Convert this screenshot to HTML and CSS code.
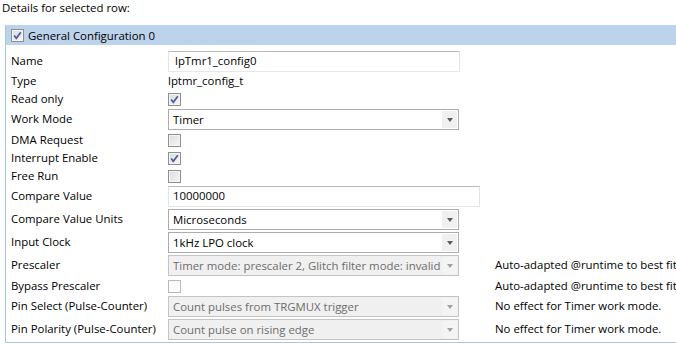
FILE: index.html
```html
<!DOCTYPE html>
<html lang="en">
<head>
  <meta charset="UTF-8">
  <meta name="viewport" content="width=device-width, initial-scale=1.0">
  <title>Details for selected row</title>
  <link rel="stylesheet" href="styles.css">
</head>
<body>
  <p class="caption">Details for selected row:</p>

  <div class="group">
    <div class="group-head">
      <span class="cb checked"><svg viewBox="0 0 11 11"><path d="M2.2 5.6 L4.3 8.3 L8.8 2.2"/></svg></span>
      <span>General Configuration 0</span>
    </div>

    <div class="props">
      <div class="row field">
        <span class="label">Name</span>
        <div class="textbox">lpTmr1_config0</div>
      </div>

      <div class="row plain">
        <span class="label">Type</span>
        <span class="value">lptmr_config_t</span>
      </div>

      <div class="row check">
        <span class="label">Read only</span>
        <span class="cb checked"><svg viewBox="0 0 11 11"><path d="M2.2 5.6 L4.3 8.3 L8.8 2.2"/></svg></span>
      </div>

      <div class="row field">
        <span class="label">Work Mode</span>
        <div class="combo"><span class="combo-text">Timer</span><span class="combo-btn"><i class="arrow"></i></span></div>
      </div>

      <div class="row check">
        <span class="label">DMA Request</span>
        <span class="cb"></span>
      </div>

      <div class="row check">
        <span class="label">Interrupt Enable</span>
        <span class="cb checked"><svg viewBox="0 0 11 11"><path d="M2.2 5.6 L4.3 8.3 L8.8 2.2"/></svg></span>
      </div>

      <div class="row check">
        <span class="label">Free Run</span>
        <span class="cb"></span>
      </div>

      <div class="row field">
        <span class="label">Compare Value</span>
        <div class="textbox wide">10000000</div>
      </div>

      <div class="row field">
        <span class="label">Compare Value Units</span>
        <div class="combo"><span class="combo-text">Microseconds</span><span class="combo-btn"><i class="arrow"></i></span></div>
      </div>

      <div class="row field">
        <span class="label">Input Clock</span>
        <div class="combo"><span class="combo-text">1kHz LPO clock</span><span class="combo-btn"><i class="arrow"></i></span></div>
      </div>

      <div class="row field">
        <span class="label">Prescaler</span>
        <div class="combo disabled"><span class="combo-text">Timer mode: prescaler 2, Glitch filter mode: invalid</span><span class="combo-btn"><i class="arrow"></i></span></div>
        <span class="note">Auto-adapted @runtime to best fit</span>
      </div>

      <div class="row check">
        <span class="label">Bypass Prescaler</span>
        <span class="cb disabled"></span>
        <span class="note after-cb">Auto-adapted @runtime to best fit</span>
      </div>

      <div class="row field">
        <span class="label">Pin Select (Pulse-Counter)</span>
        <div class="combo disabled"><span class="combo-text">Count pulses from TRGMUX trigger</span><span class="combo-btn"><i class="arrow"></i></span></div>
        <span class="note">No effect for Timer work mode.</span>
      </div>

      <div class="row field">
        <span class="label">Pin Polarity (Pulse-Counter)</span>
        <div class="combo disabled"><span class="combo-text">Count pulse on rising edge</span><span class="combo-btn"><i class="arrow"></i></span></div>
        <span class="note">No effect for Timer work mode.</span>
      </div>
    </div>
  </div>
</body>
</html>
```

FILE: styles.css
```css
body {
  margin: 0;
  width: 676px;
  height: 345px;
  overflow: hidden;
  background: #fff;
  color: #000;
  font-family: 'Open Sans', 'Noto Sans', sans-serif;
  font-size: 11.4px;
}

.caption {
  margin: 0;
  padding-left: 2px;
  height: 25px;
  line-height: 16px;
}

.group {
  margin-left: 5px;
  width: 720px;
  border-left: 1px solid #a9c6e6;
  border-bottom: 1px solid #a9c6e6;
}

.group-head {
  display: flex;
  align-items: center;
  gap: 4px;
  height: 20px;
  padding-left: 5px;
  background: #bcd3eb;
}

.props {
  padding: 5px 0 1px 5px;
}

.row {
  display: flex;
  align-items: center;
  white-space: nowrap;
}

.row.field {
  height: 23px;
}

.row.check {
  height: 18px;
}

.row.plain {
  height: 17px;
}

.label,
.value,
.note {
  padding-bottom: 2px;
}

.label {
  width: 157px;
  flex: none;
}

/* checkbox */
.cb {
  box-sizing: border-box;
  width: 13px;
  height: 13px;
  flex: none;
  border: 1px solid #8e8f8f;
  background: linear-gradient(135deg, #dcdcdc, #f6f6f6);
  box-shadow: inset 0 0 0 1px #f4f4f4;
  display: flex;
  align-items: center;
  justify-content: center;
}

.cb svg {
  width: 11px;
  height: 11px;
}

.cb path {
  fill: none;
  stroke: #4a5c9c;
  stroke-width: 1.7;
}

.cb.disabled {
  border-color: #b9b9b9;
  background: #fbfbfb;
  box-shadow: none;
}

/* text field */
.textbox {
  box-sizing: border-box;
  width: 292px;
  height: 21px;
  line-height: 18px;
  padding-left: 6px;
  border: 1px solid;
  border-color: #b9b9b9 #e0e3e8 #e6e8ec #e0e3e8;
  background: #fff;
}

.textbox.wide {
  width: 312px;
  padding-left: 4px;
}

/* combo box */
.combo {
  box-sizing: border-box;
  width: 291px;
  height: 21px;
  flex: none;
  display: flex;
  align-items: center;
  border: 1px solid #acacac;
  background: #fff;
}

.combo-text {
  flex: 1;
  padding-left: 4px;
  padding-bottom: 1px;
  overflow: hidden;
}

.combo-btn {
  width: 15px;
  height: 17px;
  margin-right: 1px;
  background: #f0f0f0;
  display: flex;
  align-items: center;
  justify-content: center;
}

.arrow {
  width: 0;
  height: 0;
  margin-top: 1px;
  border-left: 3.5px solid transparent;
  border-right: 3.5px solid transparent;
  border-top: 4px solid #5c5c5c;
}

.combo.disabled {
  background: #f0f0f0;
  border-color: #c4c4c4;
  color: #6d6d6d;
}

.combo.disabled .combo-btn {
  background: #f4f4f4;
}

.combo.disabled .arrow {
  border-top-color: #a2a2a2;
}

.note {
  padding-left: 36px;
}

.note.after-cb {
  padding-left: 314px;
}
```
